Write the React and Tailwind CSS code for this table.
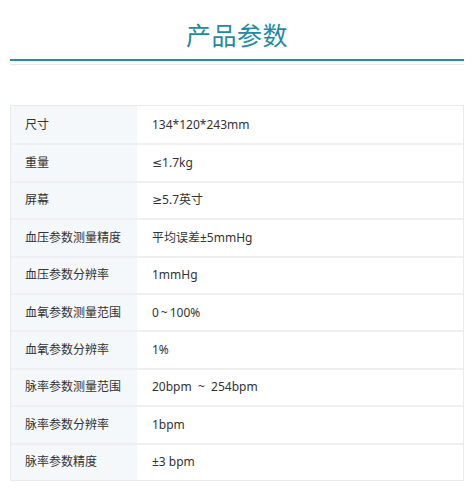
import React from "react";

const rows = [
  ["尺寸", "134*120*243mm"],
  ["重量", "≤1.7kg"],
  ["屏幕", "≥5.7英寸"],
  ["血压参数测量精度", "平均误差±5mmHg"],
  ["血压参数分辨率", "1mmHg"],
  ["血氧参数测量范围", "0\u2009~\u2009100%"],
  ["血氧参数分辨率", "1%"],
  ["脉率参数测量范围", "20bpm  ~  254bpm"],
  ["脉率参数分辨率", "1bpm"],
  ["脉率参数精度", "±3 bpm"],
];

export default function App() {
  return (
    <div
      className="w-[474px] h-[499px] bg-white overflow-hidden"
      style={{ fontFamily: '"Noto Sans", "DejaVu Sans", "Noto Sans CJK SC", sans-serif' }}
    >
      <div className="pt-[17px] flex justify-center">
        <h1
          className="text-[25px] leading-[34px] text-[#2389a0] tracking-[0.5px]"
          style={{ fontFamily: '"Noto Sans CJK SC", sans-serif' }}
        >
          产品参数
        </h1>
      </div>
      <div className="mx-[10px] mt-[8px] h-[2px] bg-[#2a8ba1]" />
      <div className="mx-[10px] mt-[3px] h-[1px] bg-[#e6e8ea]" />
      <div className="mx-[10px] mt-[40px] border border-[#e8eaec]">
        {rows.map(([k, v], i) => (
          <div
            key={i}
            className={`flex h-[37.4px] ${i > 0 ? "border-t-[2px] border-[#eef0f2]" : ""}`}
          >
            <div className="w-[126px] bg-[#f5f8fb] flex items-center pl-[14px] text-[12px] text-[#333]">
              {k}
            </div>
            <div className="flex-1 flex items-center pl-[15px] text-[12px] text-[#333] whitespace-pre">
              {v}
            </div>
          </div>
        ))}
      </div>
    </div>
  );
}
